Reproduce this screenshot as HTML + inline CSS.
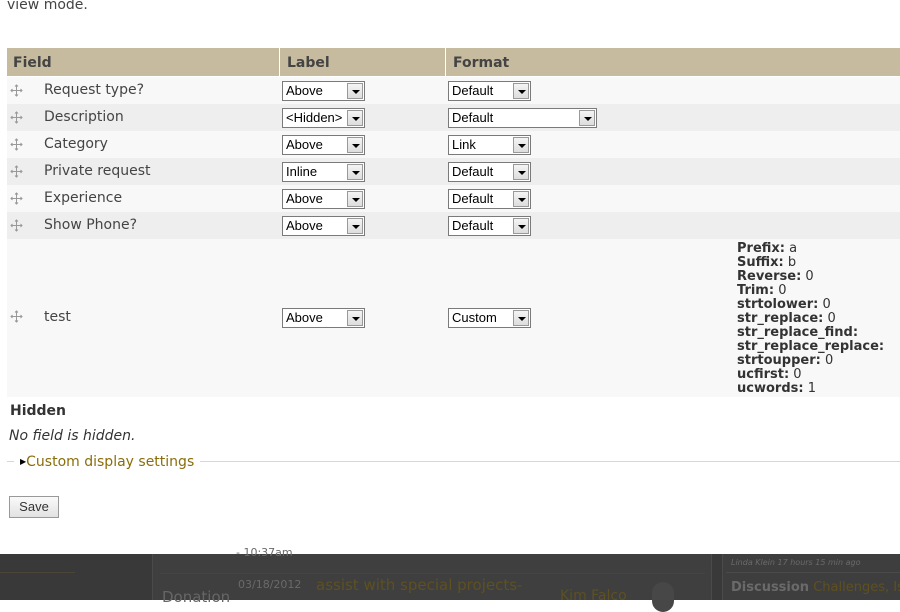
<!DOCTYPE html>
<html><head><meta charset="utf-8"><style>
*{margin:0;padding:0;box-sizing:border-box}
body{width:900px;height:600px;overflow:hidden;background:#fff;font-family:"DejaVu Sans",Verdana,sans-serif;font-size:14px;color:#444;position:relative}
.abs{position:absolute}
.sel{position:absolute;height:20px;border:1px solid #7a7a7a;background:#fff;font-family:"Liberation Sans",Arial,sans-serif;font-size:13px;color:#000;line-height:18px;padding-left:3px}
.sel i{position:absolute;right:1px;top:1px;width:16px;height:16px;border:1px solid #999;background:linear-gradient(#f4f4f4,#ddd)}
.sel i:after{content:"";position:absolute;left:4px;top:6px;border-left:4px solid transparent;border-right:4px solid transparent;border-top:4px solid #000}
.row{position:absolute;left:7px;width:893px;height:27px}
.drag{position:absolute;left:3px;top:7px;width:13px;height:13px}
.fname{position:absolute;left:37px;top:5px}
.fs{position:absolute;left:737px;top:242px;font-size:13px;line-height:14px;color:#333}
.fs b{color:#333}
</style></head><body>
<svg width="0" height="0" style="position:absolute"><symbol id="d" viewBox="0 0 13 13"><path d="M6.5 1v11M1 6.5h11M5 2.5l1.5-1.5 1.5 1.5M5 10.5l1.5 1.5 1.5-1.5M2.5 5L1 6.5 2.5 8M10.5 5L12 6.5 10.5 8" stroke="#999" fill="none" stroke-width="1"/></symbol></svg>
<div class="abs" style="left:7px;top:-3px">view mode.</div>
<div class="abs" style="left:7px;top:48px;width:893px;height:28px;background:#c6bb9e"></div>
<div class="abs" style="left:279px;top:48px;width:1px;height:28px;background:#fff"></div>
<div class="abs" style="left:445px;top:48px;width:1px;height:28px;background:#fff"></div>
<div class="abs" style="left:13px;top:55px;font-weight:bold">Field</div>
<div class="abs" style="left:287px;top:55px;font-weight:bold">Label</div>
<div class="abs" style="left:453px;top:55px;font-weight:bold">Format</div>

<div class="row" style="top:77px;background:#f8f8f8"><svg class="drag"><use href="#d"/></svg><span class="fname">Request type?</span></div>
<div class="row" style="top:104px;background:#eeeeee"><svg class="drag"><use href="#d"/></svg><span class="fname">Description</span></div>
<div class="row" style="top:131px;background:#f8f8f8"><svg class="drag"><use href="#d"/></svg><span class="fname">Category</span></div>
<div class="row" style="top:158px;background:#eeeeee"><svg class="drag"><use href="#d"/></svg><span class="fname">Private request</span></div>
<div class="row" style="top:185px;background:#f8f8f8"><svg class="drag"><use href="#d"/></svg><span class="fname">Experience</span></div>
<div class="row" style="top:212px;background:#eeeeee"><svg class="drag"><use href="#d"/></svg><span class="fname">Show Phone?</span></div>
<div class="row" style="top:239px;height:158px;background:#f8f8f8"><svg class="drag" style="top:71px"><use href="#d"/></svg><span class="fname" style="top:70px">test</span></div>

<div class="sel" style="left:282px;top:81px;width:83px">Above<i></i></div>
<div class="sel" style="left:448px;top:81px;width:83px">Default<i></i></div>
<div class="sel" style="left:282px;top:108px;width:83px">&lt;Hidden&gt;<i></i></div>
<div class="sel" style="left:448px;top:108px;width:149px">Default<i></i></div>
<div class="sel" style="left:282px;top:135px;width:83px">Above<i></i></div>
<div class="sel" style="left:448px;top:135px;width:83px">Link<i></i></div>
<div class="sel" style="left:282px;top:162px;width:83px">Inline<i></i></div>
<div class="sel" style="left:448px;top:162px;width:83px">Default<i></i></div>
<div class="sel" style="left:282px;top:189px;width:83px">Above<i></i></div>
<div class="sel" style="left:448px;top:189px;width:83px">Default<i></i></div>
<div class="sel" style="left:282px;top:216px;width:83px">Above<i></i></div>
<div class="sel" style="left:448px;top:216px;width:83px">Default<i></i></div>
<div class="sel" style="left:282px;top:308px;width:83px">Above<i></i></div>
<div class="sel" style="left:448px;top:308px;width:83px">Custom<i></i></div>

<div class="fs"><b>Prefix:</b> a<br><b>Suffix:</b> b<br><b>Reverse:</b> 0<br><b>Trim:</b> 0<br><b>strtolower:</b> 0<br><b>str_replace:</b> 0<br><b>str_replace_find:</b><br><b>str_replace_replace:</b><br><b>strtoupper:</b> 0<br><b>ucfirst:</b> 0<br><b>ucwords:</b> 1</div>

<div class="abs" style="left:10px;top:403px;font-weight:bold;color:#333">Hidden</div>
<div class="abs" style="left:9px;top:428px;font-style:italic;color:#333">No field is hidden.</div>
<div class="abs" style="left:7px;top:461px;width:893px;height:1px;background:#ddd8c0"></div>
<div class="abs" style="left:14px;top:454px;padding:0 6px;background:#fff;color:#8a6d0b"><span style="font-size:8px;color:#000;position:relative;top:-2px">▶</span>Custom display settings</div>
<div class="abs" style="left:9px;top:496px;width:50px;height:22px;border:1px solid #999;background:linear-gradient(#fafafa,#e2e2e2);font-family:'Liberation Sans',Arial,sans-serif;font-size:13px;color:#333;text-align:center;line-height:20px">Save</div>

<div class="abs" style="left:0;top:554px;width:900px;height:46px;background:#393939"></div>
<div class="abs" style="left:0;top:572px;width:75px;height:1px;background:#4a4536"></div>
<div class="abs" style="left:152px;top:554px;width:560px;height:46px;background:#3f3f3f;border-left:1px solid #4a4a4a;border-right:1px solid #4a4a4a"></div>
<div class="abs" style="left:160px;top:573px;width:545px;height:1px;background:#454545"></div>
<div class="abs" style="left:236px;top:546px;font-size:11px;color:#6a6a6a">- 10:37am</div>
<div class="abs" style="left:238px;top:578px;font-size:11px;color:#6a6a6a">03/18/2012</div>
<div class="abs" style="left:316px;top:576px;font-size:15px;color:#5e5020">assist with special projects-</div>
<div class="abs" style="left:162px;top:588px;font-size:15px;color:#666">Donation</div>
<div class="abs" style="left:560px;top:588px;font-size:14px;color:#5e5020">Kim Falco</div>
<div class="abs" style="left:652px;top:582px;width:22px;height:30px;border-radius:11px;background:#474747"></div>
<div class="abs" style="left:722px;top:554px;width:178px;height:46px;background:#3e3e3e;border-left:1px solid #4a4a4a"></div>
<div class="abs" style="left:731px;top:558px;font-size:8px;color:#6a6a6a;font-style:italic">Linda Klein 17 hours 15 min ago</div>
<div class="abs" style="left:726px;top:572px;width:174px;height:1px;background:#4a4a4a"></div>
<div class="abs" style="left:731px;top:580px;font-size:13px;color:#6a6a6a;white-space:nowrap"><b>Discussion</b> <span style="color:#5e5020">Challenges, Iss</span></div>
</body></html>
